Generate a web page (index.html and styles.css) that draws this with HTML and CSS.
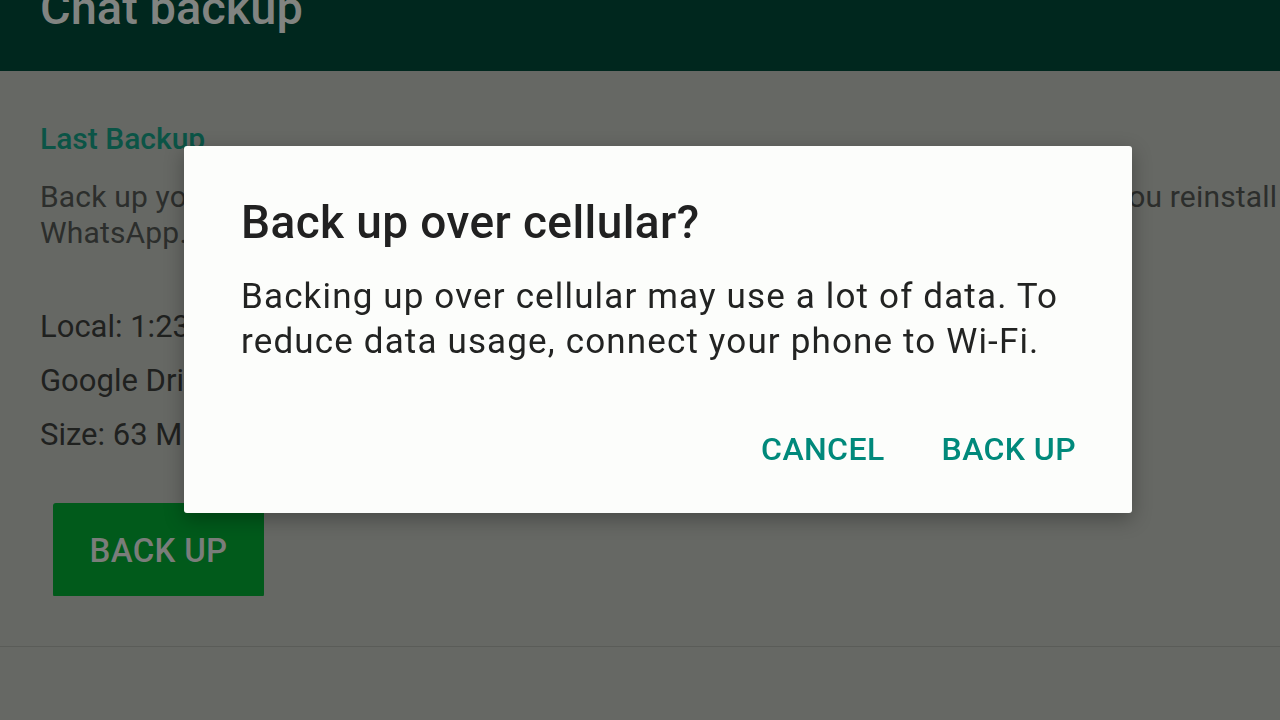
FILE: index.html
```html
<!DOCTYPE html>
<html>
<head>
<meta charset="utf-8">
<link rel="stylesheet" href="styles.css">
</head>
<body>
<div class="page">
  <header class="appbar"><h1 class="appbar-title">Chat backup</h1></header>
  <main class="content">
    <h2 class="section-title">Last Backup</h2>
    <p class="desc">Back up your messages and media to Google Drive. You can restore them when you reinstall<br>WhatsApp.</p>
    <div class="info">
      <div class="info-row">Local: 1:23 PM</div>
      <div class="info-row">Google Drive: Never</div>
      <div class="info-row">Size: 63 MB</div>
    </div>
    <button class="primary">BACK UP</button>
  </main>
  <div class="divider"></div>
</div>
<div class="overlay">
  <div class="dialog">
    <h3 class="dialog-title">Back up over cellular?</h3>
    <p class="dialog-body">Backing up over cellular may use a lot of data. To reduce data usage, connect your phone to Wi-Fi.</p>
    <div class="dialog-actions">
      <span class="action">CANCEL</span>
      <span class="action">BACK UP</span>
    </div>
  </div>
</div>
</body>
</html>
```
FILE: styles.css
```css
html, body {
  margin: 0;
  padding: 0;
  width: 1280px;
  height: 720px;
  overflow: hidden;
  background: #666864;
  font-family: Roboto, "Noto Sans", sans-serif;
}
.page {
  width: 1280px;
  height: 720px;
  background: #666864;
}
.appbar {
  height: 71px;
  background: #00271e;
  padding: 0 40px;
  box-sizing: border-box;
  overflow: hidden;
}
.appbar-title {
  margin: 0;
  font-size: 47px;
  font-weight: 500;
  color: #818481;
  line-height: 30px;
  margin-top: -7px;
}
.content {
  padding: 50px 0 0 40px;
  height: 525px;
  box-sizing: border-box;
  overflow: hidden;
}
.section-title {
  margin: 0;
  font-size: 30px;
  font-weight: 500;
  color: #0b5446;
  line-height: 36px;
}
.desc {
  margin: 22px 0 0 0;
  font-size: 30px;
  color: #2c2e2c;
  line-height: 36px;
  white-space: nowrap;
  letter-spacing: 0.17px;
}
.info {
  margin-top: 49px;
}
.info-row {
  font-size: 31px;
  color: #1f211f;
  line-height: 54px;
}
.primary {
  margin: 41px 0 0 13px;
  width: 211px;
  height: 94px;
  border: none;
  border-radius: 3px;
  background: #015a1b;
  color: #7a7d7a;
  font-family: Roboto, sans-serif;
  font-size: 33px;
  font-weight: 500;
  padding: 0;
  letter-spacing: 0.3px;
}
.divider {
  height: 1px;
  background: #5a5c58;
  margin-top: 50px;
}
.overlay {
  position: fixed;
  inset: 0;
  display: flex;
  justify-content: flex-start;
  align-items: flex-start;
  padding: 146px 0 0 184px;
  box-sizing: border-box;
}
.dialog {
  width: 948px;
  height: 367px;
  box-sizing: border-box;
  background: #fcfdfb;
  border-radius: 3px;
  box-shadow: 0 6px 20px rgba(0,0,0,0.3);
  padding: 0 56px 0 57px;
  display: flex;
  flex-direction: column;
}
.dialog-title {
  margin: 48px 0 0 0;
  font-size: 46px;
  font-weight: 500;
  color: #212121;
  line-height: 56px;
  letter-spacing: 0.4px;
}
.dialog-body {
  margin: 24px 0 0 0;
  font-size: 35px;
  color: #222322;
  line-height: 45px;
  letter-spacing: 1.15px;
}
.dialog-actions {
  margin-top: 65px;
  display: flex;
  justify-content: flex-end;
  gap: 57px;
}
.action {
  font-size: 32px;
  font-weight: 500;
  color: #00897b;
  line-height: 40px;
  letter-spacing: 0.4px;
}
```
